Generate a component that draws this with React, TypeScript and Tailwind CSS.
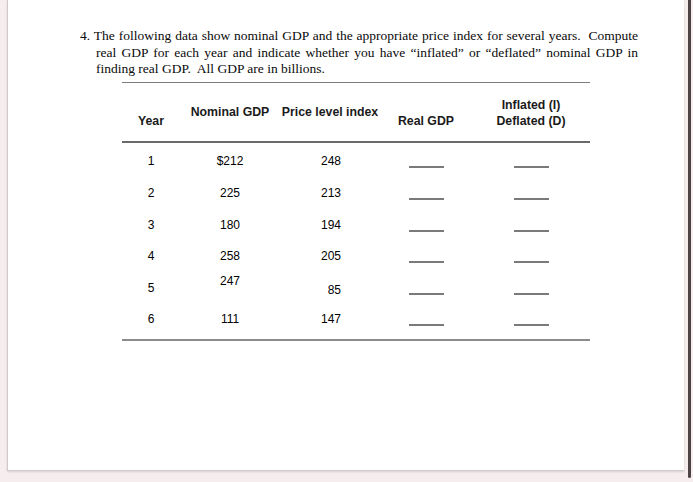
import React from 'react';

// Rows of the exercise: year, nominal GDP, price level index
const rows = [
  { year: '1', nominal: '$212', price: '248' },
  { year: '2', nominal: '225', price: '213' },
  { year: '3', nominal: '180', price: '194' },
  { year: '4', nominal: '258', price: '205' },
  { year: '5', nominal: '247', price: '85', shifted: true },
  { year: '6', nominal: '111', price: '147' },
];

const cols = 'grid grid-cols-[58px_100px_100px_92px_118px]';

function Blank() {
  return <div className="mx-auto mt-[12px] h-[2px] w-[35px] bg-[#7a7a7a]" />;
}

export default function App() {
  return (
    <div className="flex h-[482px] w-[693px] overflow-hidden bg-[#f6eeee]">
      {/* ── Feuille ── */}
      <div className="ml-[7px] h-[471px] w-[677px] border-b border-l border-[#cfcaca] bg-white shadow-[0_1px_2px_rgba(0,0,0,0.12)]">
        {/* Énoncé */}
        <div className="pt-[28px] font-['Liberation_Serif',serif] text-[13.5px] leading-[16.5px] text-[#0a0a0a]">
          <p className="ml-[72px] w-[558px] text-justify [text-align-last:justify]">
            4. The following data show nominal GDP and the appropriate price index for several years.&nbsp; Compute
          </p>
          <p className="ml-[88px] w-[542px] text-justify [text-align-last:justify]">
            real GDP for each year and indicate whether you have “inflated” or “deflated” nominal GDP in
          </p>
          <p className="ml-[88px] w-[542px]">finding real GDP.&nbsp; All GDP are in billions.</p>
        </div>

        {/* Tableau */}
        <div className="ml-[114px] mt-[4px] w-[468px] font-['Liberation_Sans',Arial,sans-serif]">
          <div className="h-px bg-[#7d7d7d]" />

          {/* En-tête */}
          <div className={`${cols} h-[58px] items-end text-center text-[12.3px] font-bold leading-[16px] text-[#1a1a1a]`}>
            <div className="pb-[12px]">Year</div>
            <div className="pb-[21px]">Nominal GDP</div>
            <div className="pb-[21px]">Price level index</div>
            <div className="pb-[12px]">Real GDP</div>
            <div className="pb-[12px]">
              Inflated (I)
              <br />
              Deflated (D)
            </div>
          </div>

          <div className="h-[2px] bg-[#6a6a6a]" />

          {/* Lignes */}
          <div className="pb-[4px] pt-[3.2px] text-[12px] leading-[14px] text-[#000]">
            {rows.map((r) => (
              <div key={r.year} className={`${cols} h-[31.6px] items-center`}>
                <div className="text-center">{r.year}</div>
                <div className={r.shifted ? 'mb-[14px] text-center' : 'text-center'}>{r.nominal}</div>
                <div className={r.shifted ? 'mt-[4px] pr-[39px] text-right' : 'pr-[39px] text-right'}>{r.price}</div>
                <Blank />
                <Blank />
              </div>
            ))}
          </div>

          <div className="h-[2px] bg-[#8c8c8c]" />
        </div>
      </div>

      {/* Barre de défilement */}
      <div className="ml-[4px] h-[478px] w-[3px] rounded-b-full bg-[#4b4546]" />
    </div>
  );
}
